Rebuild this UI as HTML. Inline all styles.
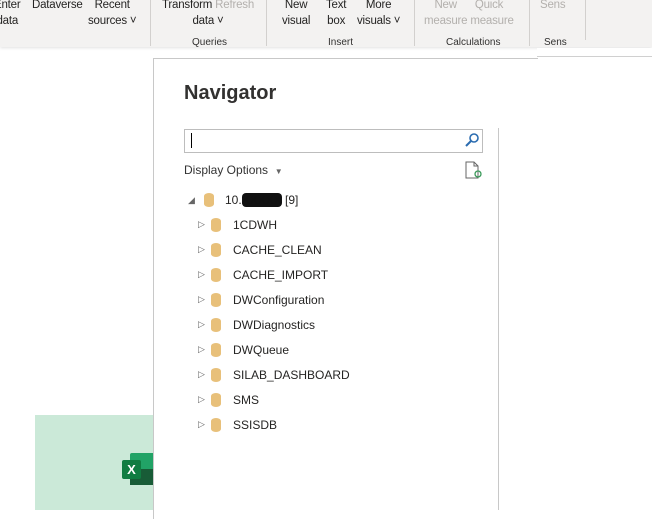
<!DOCTYPE html><html><head><style>
body{margin:0;width:652px;height:510px;overflow:hidden;background:#fff;font-family:"Liberation Sans",sans-serif;position:relative}
.a{position:absolute;white-space:nowrap}
.rb{position:absolute;left:0;top:0;width:652px;height:47px;background:#f3f2f1;box-shadow:0 1px 3px rgba(0,0,0,.12)}
.t{font-size:11.5px;color:#252423;text-align:center;line-height:16px;letter-spacing:-0.2px}
.g{color:#b3b0ad}
.s{font-size:10px;color:#323130}
.sep{position:absolute;top:0;width:1px;height:46px;background:#d2d0ce}
.db{position:absolute;width:10px;height:14px;background:#e8c07a;border-radius:5px/3px}
.tri{position:absolute;font-size:9px;color:#666}
.it{position:absolute;font-size:12px;color:#252423}
</style></head><body>
<div class="rb"></div>
<div class="a t" style="left:-6px;top:-3px">Enter<br>data</div>
<div class="a t" style="left:32px;top:-3px">Dataverse</div>
<div class="a t" style="left:88px;top:-3px">Recent<br>sources ˅</div>
<div class="sep" style="left:150px"></div>
<div class="a t" style="left:162px;top:-3px">Transform <span class="g">Refresh</span><br>data ˅</div>
<div class="a s" style="left:192px;top:37px">Queries</div>
<div class="sep" style="left:266px"></div>
<div class="a t" style="left:282px;top:-3px">New<br>visual</div>
<div class="a t" style="left:326px;top:-3px">Text<br>box</div>
<div class="a t" style="left:357px;top:-3px">More<br>visuals ˅</div>
<div class="a s" style="left:328px;top:37px">Insert</div>
<div class="sep" style="left:414px"></div>
<div class="a t g" style="left:424px;top:-3px">New&nbsp;&nbsp;&nbsp;&nbsp;&nbsp;&nbsp;Quick<br>measure measure</div>
<div class="a s" style="left:446px;top:37px">Calculations</div>
<div class="sep" style="left:529px"></div>
<div class="a t g" style="left:540px;top:-3px">Sens</div>
<div class="a s" style="left:544px;top:37px">Sens</div>
<div class="sep" style="left:585px;height:40px"></div>
<div style="position:absolute;left:537px;top:48px;width:115px;height:8px;background:#fff;border-bottom:1px solid #d0d0d0"></div>
<div style="position:absolute;left:35px;top:415px;width:118px;height:95px;background:#cbe9d8"></div>
<div style="position:absolute;left:130px;top:453px;width:26px;height:32px;background:#21a366;border-radius:2px"></div>
<div style="position:absolute;left:130px;top:469px;width:26px;height:16px;background:#185c37"></div>
<div style="position:absolute;left:122px;top:460px;width:19px;height:19px;background:#107c41;border-radius:2px;color:#fff;font-size:13px;font-weight:bold;text-align:center;line-height:19px">X</div>
<div style="position:absolute;left:153px;top:58px;width:384px;height:460px;background:#fff;border-left:1px solid #c8c8c8;border-top:1px solid #c8c8c8"></div>
<div class="a" style="left:184px;top:82px;font-size:20px;font-weight:bold;color:#323130">Navigator</div>
<div style="position:absolute;left:184px;top:129px;width:297px;height:22px;border:1px solid #bdbdbd;background:#fff"></div>
<div style="position:absolute;left:191px;top:133px;width:1px;height:15px;background:#000"></div>
<svg style="position:absolute;left:464px;top:132px" width="16" height="16"><circle cx="10" cy="6" r="4" fill="none" stroke="#2b6cb0" stroke-width="1.6"/><line x1="7" y1="9" x2="2" y2="14" stroke="#2b6cb0" stroke-width="2"/></svg>
<div style="position:absolute;left:498px;top:128px;width:1px;height:382px;background:#c8c8c8"></div>
<div class="a" style="left:184px;top:163px;font-size:12px;color:#333">Display Options&nbsp;&nbsp;<span style="font-size:8px;color:#666">▼</span></div>
<svg style="position:absolute;left:465px;top:161px" width="18" height="18"><path d="M1 1h8l4 4v12H1z" fill="none" stroke="#666"/><path d="M9 1v4h4" fill="none" stroke="#666"/><circle cx="13" cy="13" r="3" fill="none" stroke="#3a9a5a" stroke-width="1.3"/></svg>
<div class="tri" style="left:188px;top:195px">◢</div>
<div class="db" style="left:204px;top:193px"></div>
<div class="it" style="left:225px;top:193px">10.<span style="background:#111;color:#111;border-radius:4px">XXXXX</span> [9]</div>
<div class="tri" style="left:198px;top:219px">▷</div><div class="db" style="left:211px;top:218px"></div><div class="it" style="left:233px;top:218px">1CDWH</div>
<div class="tri" style="left:198px;top:244px">▷</div><div class="db" style="left:211px;top:243px"></div><div class="it" style="left:233px;top:243px">CACHE_CLEAN</div>
<div class="tri" style="left:198px;top:269px">▷</div><div class="db" style="left:211px;top:268px"></div><div class="it" style="left:233px;top:268px">CACHE_IMPORT</div>
<div class="tri" style="left:198px;top:294px">▷</div><div class="db" style="left:211px;top:293px"></div><div class="it" style="left:233px;top:293px">DWConfiguration</div>
<div class="tri" style="left:198px;top:319px">▷</div><div class="db" style="left:211px;top:318px"></div><div class="it" style="left:233px;top:318px">DWDiagnostics</div>
<div class="tri" style="left:198px;top:344px">▷</div><div class="db" style="left:211px;top:343px"></div><div class="it" style="left:233px;top:343px">DWQueue</div>
<div class="tri" style="left:198px;top:369px">▷</div><div class="db" style="left:211px;top:368px"></div><div class="it" style="left:233px;top:368px">SILAB_DASHBOARD</div>
<div class="tri" style="left:198px;top:394px">▷</div><div class="db" style="left:211px;top:393px"></div><div class="it" style="left:233px;top:393px">SMS</div>
<div class="tri" style="left:198px;top:419px">▷</div><div class="db" style="left:211px;top:418px"></div><div class="it" style="left:233px;top:418px">SSISDB</div>
</body></html>
